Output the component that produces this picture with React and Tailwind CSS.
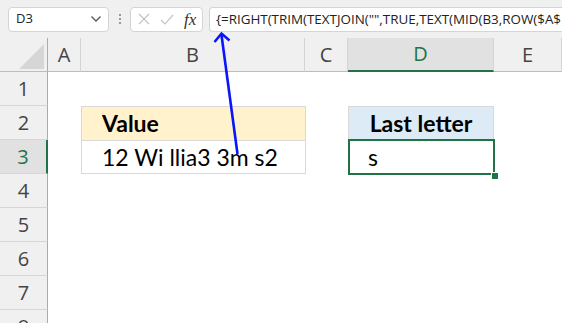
import React from "react";

const HFONT = { fontFamily: '"Open Sans", "Noto Sans", sans-serif' };

function ColHeader({ label, cls, selected }) {
  return (
    <div
      className={
        cls +
        " h-full flex items-center justify-center border-r border-[#d4d4d4] text-[20px] " +
        (selected
          ? "bg-[#e1e1e1] text-[#217346] border-b-2 border-b-[#217346]"
          : "bg-[#f0f0f0] text-[#444444] border-b border-b-[#bdbdbd]")
      }
      style={HFONT}
    >
      {label}
    </div>
  );
}

function RowHeader({ n, selected }) {
  return (
    <div
      className={
        "w-[48px] shrink-0 h-full flex items-center justify-center text-[20px] border-b border-b-[#d6d6d6] " +
        (selected
          ? "bg-[#e1e1e1] text-[#217346] border-r-2 border-r-[#217346]"
          : "bg-[#f0f0f0] text-[#444444] border-r border-r-[#ababab]")
      }
      style={HFONT}
    >
      {n}
    </div>
  );
}

const CELLFONT = { fontFamily: 'Lato, "Liberation Sans", sans-serif' };

export default function App() {
  return (
    <div className="relative w-[562px] h-[323px] overflow-hidden bg-white">
      {/* Formula bar */}
      <div className="h-[38px] bg-[#f0f0f0] flex items-center pl-[8px] gap-0" style={HFONT}>
        <div className="w-[101px] h-[25px] bg-white border border-[#d4d4d4] rounded-[4px] flex items-center justify-between pl-[7px] pr-[6px] text-[13px] text-[#222222]">
          <span>D3</span>
          <svg width="12" height="8" viewBox="0 0 12 8">
            <path d="M1.5 1.5 L6 6 L10.5 1.5" fill="none" stroke="#555555" strokeWidth="1.3" />
          </svg>
        </div>
        <div className="w-[21px] flex flex-col items-center justify-center gap-[2px]">
          <div className="w-[2px] h-[2px] bg-[#9a9a9a]" />
          <div className="w-[2px] h-[2px] bg-[#9a9a9a]" />
          <div className="w-[2px] h-[2px] bg-[#9a9a9a]" />
        </div>
        <div className="w-[73px] h-[25px] bg-white border border-[#d4d4d4] rounded-[4px] flex items-center pl-[7px] gap-[10px]">
          <svg width="12" height="12" viewBox="0 0 12 12">
            <path d="M1 1 L11 11 M11 1 L1 11" stroke="#c4c4c4" strokeWidth="1.2" fill="none" />
          </svg>
          <svg width="14" height="11" viewBox="0 0 14 11">
            <path d="M1 6 L5 10 L13 1" stroke="#c4c4c4" strokeWidth="1.2" fill="none" />
          </svg>
          <span
            className="text-[17px] italic text-[#333333] leading-none"
            style={{ fontFamily: '"Liberation Serif", "DejaVu Serif", serif' }}
          >
            fx
          </span>
        </div>
        <div className="ml-[6px] flex-1 min-w-0 h-[25px] bg-white border border-[#d4d4d4] border-r-0 rounded-l-[4px] flex items-center pl-[6px] text-[13.4px] text-[#222222] whitespace-nowrap overflow-hidden">
          {'{=RIGHT(TRIM(TEXTJOIN("",TRUE,TEXT(MID(B3,ROW($A$'}
        </div>
      </div>

      {/* Column headers */}
      <div className="flex h-[34px]">
        <div className="w-[48px] shrink-0 h-full bg-[#f0f0f0] border-r border-r-[#ababab] border-b border-b-[#bdbdbd] relative">
          <svg className="absolute left-[19px] top-[6px]" width="25" height="25" viewBox="0 0 25 25">
            <path d="M25 0 L25 25 L0 25 Z" fill="#d6d6d6" />
          </svg>
        </div>
        <ColHeader label="A" cls="w-[33px] shrink-0" />
        <ColHeader label="B" cls="w-[224px] shrink-0" />
        <ColHeader label="C" cls="w-[43px] shrink-0" />
        <ColHeader label="D" cls="w-[146px] shrink-0" selected />
        <ColHeader label="E" cls="flex-1" />
      </div>

      {/* Rows */}
      <div className="flex h-[34px]">
        <RowHeader n="1" />
        <div className="flex-1" />
      </div>

      <div className="flex h-[34px]" style={CELLFONT}>
        <RowHeader n="2" />
        <div className="w-[33px] shrink-0" />
        <div className="w-[225px] shrink-0 h-full bg-[#fff2cc] border border-b-0 border-[#d9d9d9] flex items-center pl-[20px] text-[23px] font-bold text-black">
          Value
        </div>
        <div className="w-[42px] shrink-0" />
        <div className="w-[146px] shrink-0 h-full bg-[#ddebf7] border border-b-0 border-[#d9d9d9] flex items-center justify-center text-[23px] font-bold text-black">
          Last letter
        </div>
        <div className="flex-1" />
      </div>

      <div className="flex h-[34px]" style={CELLFONT}>
        <RowHeader n="3" selected />
        <div className="w-[33px] shrink-0" />
        <div className="w-[225px] shrink-0 h-full border border-[#d9d9d9] flex items-center pl-[20px] text-[23px] text-black whitespace-nowrap">
          12 Wi llia3 3m s2
        </div>
        <div className="w-[42px] shrink-0" />
        <div className="w-[146px] shrink-0 h-full relative flex items-center pl-[20px] text-[23px] text-black">
          s
          <div className="absolute left-0 top-[-1px] w-[147px] h-[36px] border-2 border-[#217346]" />
          <div className="absolute left-[143px] top-[32px] w-[6px] h-[6px] bg-[#217346] border border-white box-content" />
        </div>
        <div className="flex-1" />
      </div>

      {["4", "5", "6", "7", "8"].map((n) => (
        <div key={n} className="flex h-[34px]">
          <RowHeader n={n} />
          <div className="flex-1" />
        </div>
      ))}

      {/* Arrow overlay */}
      <svg className="absolute left-0 top-0 pointer-events-none" width="562" height="323" viewBox="0 0 562 323">
        <line x1="237.5" y1="154" x2="221.5" y2="35" stroke="#0a14ff" strokeWidth="2.6" />
        <polyline points="214.5,42 221.5,33.5 229.5,40.5" fill="none" stroke="#0a14ff" strokeWidth="2.6" strokeLinejoin="miter" />
      </svg>
    </div>
  );
}
